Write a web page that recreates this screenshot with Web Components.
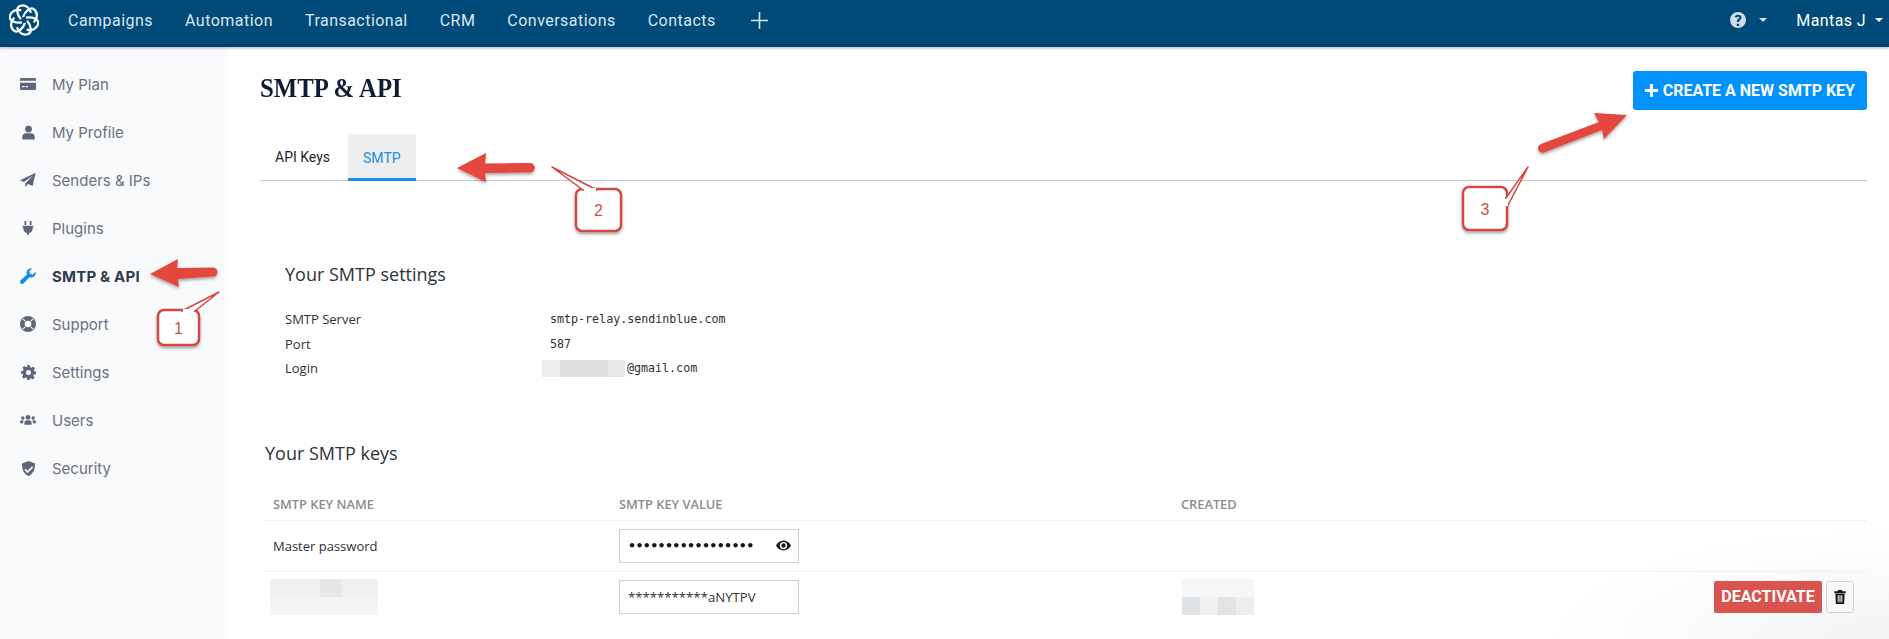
<!DOCTYPE html>
<html>
<head>
<meta charset="utf-8">
<title>SMTP & API</title>
<style>
  html, body { margin: 0; height: 100%; }
  body { font-family: "Open Sans", sans-serif; overflow: hidden; }
  app-shell { position: relative; }
</style>
</head>
<body>
<app-shell>
  <top-bar slot="top"></top-bar>
  <side-menu slot="side"></side-menu>
  <main-panel slot="main"></main-panel>
  <call-outs slot="over"></call-outs>
</app-shell>

<script>
// svg icons used around the page, all drawn in a 24x24 box
const ICONS = {
  card: '<path d="M0 4.5A1.5 1.5 0 0 1 1.500 3h21A1.500 1.500 0 0 1 24 4.500V7H0zM0 10h24v9.500a1.500 1.500 0 0 1-1.500 1.500h-21A1.500 1.500 0 0 1 0 19.500zm3 5v2h4v-2zm5.500 0v2H12v-2z" fill-rule="evenodd"/>',
  user: '<circle cx="12" cy="6.500" r="5.500"/><path d="M2 23v-3.500A6.500 6.500 0 0 1 8.500 13h7a6.500 6.500 0 0 1 6.500 6.500V23z"/>',
  plane: '<path d="M23.500 1 19 21l-7-3-4 5v-6L20 5 6 15l-6-2.500z"/>',
  plug: '<path d="M6 0h3v7H6zM15 0h3v7h-3zM3 8h18v3h-1v2a8 8 0 0 1-6.500 7.800V24h-3v-3.200A8 8 0 0 1 4 13v-2H3z"/>',
  wrench: '<path d="M23.500 5.500a7 7 0 0 1-9.300 8.200L5.500 23a3 3 0 0 1-4.400-.1 3.100 3.100 0 0 1-.1-4.400l9.300-8.700A7 7 0 0 1 18.500.5l-4.300 4.300.9 4 4 .9z"/>',
  support: '<path fill-rule="evenodd" d="M12 0a12 12 0 1 0 0 24 12 12 0 0 0 0-24zm0 7a5 5 0 1 1 0 10 5 5 0 0 1 0-10zM5 3.800l3.300 3.300a6 6 0 0 0-1.200 1.200L3.800 5A9 9 0 0 1 5 3.800zm14 0A9 9 0 0 1 20.200 5l-3.300 3.300a6 6 0 0 0-1.200-1.200zM3.800 19l3.300-3.300a6 6 0 0 0 1.200 1.200L5 20.200A9 9 0 0 1 3.800 19zm12.900-3.300L20.200 19a9 9 0 0 1-1.200 1.200l-3.300-3.300a6 6 0 0 0 1-1.200z"/>',
  gear: '<path fill-rule="evenodd" d="M10 0h4l.7 3.400 2 .8 2.900-1.900 2.800 2.800-1.900 2.900.8 2L24 10.700v3.900l-3.400.7-.8 2 1.900 2.900-2.800 2.800-2.900-1.900-2 .8L14 24h-4l-.7-3.300-2-.8-2.900 1.900-2.800-2.800 1.900-2.900-.8-2L0 13.900v-3.900l3.400-.7.8-2-1.900-2.900 2.800-2.800 2.900 1.900 2-.8zm2 8a4 4 0 1 0 0 8 4 4 0 0 0 0-8z"/>',
  users: '<circle cx="12" cy="8" r="3.600"/><circle cx="4.200" cy="9" r="2.500"/><circle cx="19.800" cy="9" r="2.500"/><path d="M6.500 19v-2a4.500 4.500 0 0 1 4.500-4.500h2a4.500 4.500 0 0 1 4.500 4.500v2zM0 17v-2a2.800 2.800 0 0 1 2.800-2.800h2.600A6 6 0 0 0 4.800 17zM24 17v-2a2.800 2.800 0 0 0-2.800-2.800h-2.600a6 6 0 0 1 .6 4.800z"/>',
  shield: '<path fill-rule="evenodd" d="M12 0 1.500 4C1.500 14 5 21 12 24c7-3 10.500-10 10.500-20zm5.600 8.500 1.900 1.900-9 9-5-5 1.900-1.900 3.100 3.100z"/>',
  trash: '<path fill-rule="evenodd" d="M8 2 9 0h6l1 2h5.500v3.500h-19V2zM4 6.500h16L19 24H5zM8 9v12h1.800V9zm3.100 0v12h1.800V9zm3.100 0v12H16V9z"/>',
  eye: '<path fill-rule="evenodd" d="M12 4C6.500 4 2.300 7.800 0 12c2.300 4.200 6.500 8 12 8s9.700-3.800 12-8c-2.300-4.200-6.500-8-12-8zm0 2.200a5.800 5.800 0 1 1 0 11.600 5.800 5.800 0 0 1 0-11.600zm0 2.300a3.500 3.500 0 1 0 0 7 3.500 3.500 0 0 0 0-7z"/>',
  help: '<path fill-rule="evenodd" d="M12 0a12 12 0 1 0 0 24 12 12 0 0 0 0-24zm-1.800 17.500h3.600V21h-3.600zM12 4c3.200 0 5.300 1.800 5.300 4.400 0 2-1.100 2.900-2.300 3.800-1 .7-1.300 1.100-1.300 2.300v.5h-3.300V14c0-2.100.7-3 2-3.900 1-.7 1.500-1.100 1.500-1.800 0-.8-.7-1.300-1.700-1.300-1.200 0-2 .6-2.500 1.700L7 7.100C7.900 5.200 9.600 4 12 4z"/>',
};

function icon(name, size) {
  return `<svg viewBox="0 0 24 24" width="${size}" height="${size}" fill="currentColor" aria-hidden="true">${ICONS[name]}</svg>`;
}

// page frame: bar on top, menu on the left, content on the right
class AppShell extends HTMLElement {
  constructor() {
    super();
    this.attachShadow({ mode: "open" });
    this.shadowRoot.innerHTML = `<style>
      :host { display: grid; grid-template-columns: 228px 1fr; grid-template-rows: 47px 592px; height: 639px; overflow: hidden; }
      .top { grid-column: 1 / 3; }
    </style>
    <div class="top"><slot name="top"></slot></div>
    <slot name="side"></slot>
    <slot name="main"></slot>
    <slot name="over"></slot>`;
  }
}

class TopBar extends HTMLElement {
  constructor() {
    super();
    this.attachShadow({ mode: "open" });
    const links = ["Campaigns", "Automation", "Transactional", "CRM", "Conversations", "Contacts"];
    // six petals of the logo, same stroke turned around the centre
    const petals = [0, 60, 120, 180, 240, 300].map(a => `<path transform="rotate(${a})" d="M-1 -3C1 -9 7 -14.500 11 -10.500C14.500 -7 14 -1 10 2.500"/>`).join("");
    this.shadowRoot.innerHTML = `<style>
      :host { display: flex; align-items: center; height: 47px; box-sizing: border-box; background: #004a79; border-bottom: 3px solid #004169; box-shadow: 0 1px 3px rgba(0,40,70,.35); color: #d9e6ef; font: 400 16px Roboto, sans-serif; letter-spacing: .47px; position: relative; z-index: 2; padding-bottom: 4px; padding-left: 9px; }
      .logo { display: block; margin-right: 29px; color: #fff; }
      nav { display: flex; gap: 32px; align-items: center; }
      .plus { display: block; margin-left: 3px; }
      .right { margin-left: auto; display: flex; align-items: center; color: #fff; }
      .help { display: flex; color: #cfdde8; margin-right: 6px; }
      .caret { width: 0; height: 0; border: 4px solid transparent; border-top-color: #cfdde8; border-bottom: 0; margin-left: 7px; }
      .name { margin-left: 29px; letter-spacing: .4px; }
      .right .caret:last-child { margin: 0 6px 0 9px; border-top-color: #fff; }
    </style>
    <svg class="logo" width="30" height="32" viewBox="-15.500 -16.500 31 33" fill="none" stroke="currentColor" stroke-width="2.300">${petals}</svg>
    <nav>
      ${links.map(l => `<span>${l}</span>`).join("")}
      <svg class="plus" width="17" height="17" viewBox="0 0 17 17" stroke="#d9e6ef" stroke-width="1.600"><path d="M8.500 0v17M0 8.500h17"/></svg>
    </nav>
    <div class="right">
      <span class="help">${icon("help", 16)}</span><span class="caret"></span>
      <span class="name">Mantas J</span><span class="caret"></span>
    </div>`;
  }
}

class SideMenu extends HTMLElement {
  constructor() {
    super();
    this.attachShadow({ mode: "open" });
    const items = [
      ["card", "My Plan", 16],
      ["user", "My Profile", 15],
      ["plane", "Senders & IPs", 16],
      ["plug", "Plugins", 14],
      ["wrench", "SMTP & API", 16],
      ["support", "Support", 16],
      ["gear", "Settings", 15],
      ["users", "Users", 16],
      ["shield", "Security", 15],
    ];
    this.shadowRoot.innerHTML = `<style>
      :host { display: flex; flex-direction: column; padding-top: 13px; background: #f9fafc; font: 400 15px Inter, sans-serif; color: #68717f; }
      .item { display: flex; align-items: center; height: 48px; }
      .ic { width: 16px; margin: 0 16px 0 20px; display: flex; justify-content: center; color: #5d6779; }
      .on { font-weight: 700; color: #313a4b; letter-spacing: .2px; }
      .on .ic { color: #1b8fe6; }
    </style>
    ${items.map(([ic, label, s]) => `<div class="item ${label == "SMTP & API" ? "on" : ""}"><span class="ic">${icon(ic, s)}</span><span>${label.replace("&", "&amp;")}</span></div>`).join("")}`;
  }
}

class MainPanel extends HTMLElement {
  constructor() {
    super();
    this.attachShadow({ mode: "open" });
    this.shadowRoot.innerHTML = `<style>
      :host { display: block; padding: 24px 22px 0 32px; color: #2b323a; background: radial-gradient(ellipse 340px 110px at 100% 100%, #f2f3f5, #fff); }
      .head { display: flex; justify-content: space-between; align-items: flex-start; height: 63px; }
      h1 { margin: 1px 0 0; font: 700 27.500px "Liberation Serif", serif; color: #0e1c36; transform: scaleX(.9); transform-origin: left; }
      .add { display: flex; align-items: center; gap: 5px; height: 39px; box-sizing: border-box; padding: 0 12px; background: #0092ff; border-radius: 3px; color: #fff; font: 700 16px Roboto, sans-serif; }
      .tabs { display: flex; border-bottom: 1px solid #c2c8ce; height: 47px; box-sizing: border-box; }
      .tab { display: flex; align-items: center; padding: 0 18px 0 15px; font: 400 14px Roboto, sans-serif; color: #1d2530; height: 46px; box-sizing: border-box; }
      .tab.on { background: #eeeeee; color: #1a8fe3; border-bottom: 3px solid #1a8fe3; height: 47px; padding: 3px 15px 0; }
    </style>
    <div class="head">
      <h1>SMTP &amp; API</h1>
      <div class="add"><svg width="13" height="13" viewBox="0 0 13 13" fill="#fff"><path d="M5 0h3v5h5v3H8v5H5V8H0V5h5z"/></svg>CREATE A NEW SMTP KEY</div>
    </div>
    <div class="tabs"><div class="tab">API Keys</div><div class="tab on">SMTP</div></div>
    <smtp-settings></smtp-settings>
    <smtp-keys></smtp-keys>`;
  }
}

class SmtpSettings extends HTMLElement {
  constructor() {
    super();
    this.attachShadow({ mode: "open" });
    this.shadowRoot.innerHTML = `<style>
      :host { display: block; padding: 80px 0 0 25px; font-family: "Open Sans", sans-serif; }
      h2 { margin: 0 0 20px; font-size: 18px; font-weight: 400; line-height: 26px; color: #2b323a; }
      .row { display: grid; grid-template-columns: 265px 1fr; height: 24.500px; align-items: center; font-size: 13px; color: #2b323a; }
      code { font: 11.670px "DejaVu Sans Mono", monospace; display: flex; align-items: center; }
      .blur { width: 83px; height: 17px; margin-left: -8px; margin-right: 2px; background: linear-gradient(90deg, #ededee 0 22%, #dfdfe1 22% 80%, #e8e8ea 80%); }
    </style>
    <h2>Your SMTP settings</h2>
    <div class="row"><span>SMTP Server</span><code>smtp-relay.sendinblue.com</code></div>
    <div class="row"><span>Port</span><code>587</code></div>
    <div class="row"><span>Login</span><code><span class="blur"></span>@gmail.com</code></div>`;
  }
}

class SmtpKeys extends HTMLElement {
  constructor() {
    super();
    this.attachShadow({ mode: "open" });
    this.shadowRoot.innerHTML = `<style>
      :host { display: block; padding: 59px 0 0 5px; font-family: "Open Sans", sans-serif; }
      h2 { margin: 0 0 18px; font-size: 18px; font-weight: 400; line-height: 26px; color: #2b323a; }
      .line { border-bottom: 1px solid #f0f1f2; padding-left: 8px; display: grid; grid-template-columns: 346px 562px 1fr auto; align-items: center; font-size: 13px; color: #2b323a; }
      .hd { height: 37px; box-sizing: border-box; padding-top: 4px; font-size: 12.800px; font-weight: 600; color: #8a8d90; }
      .r1 { height: 50px; }
      .r2 { height: 50px; border: 0; }
      .field { width: 180px; height: 34px; box-sizing: border-box; border: 1px solid #cfcfcf; display: flex; align-items: center; justify-content: space-between; padding: 0 7px 0 8px; font-size: 13.200px; color: #333; }
      .dots { font: 700 12.500px "DejaVu Sans", sans-serif; letter-spacing: -.6px; color: #111; }
      .eye { display: flex; color: #1a1a1a; }
      .blur1 { width: 108px; height: 36px; margin-left: -3px; background:
        linear-gradient(#e6e7e9, #e6e7e9) 50px 0 / 22px 18px no-repeat,
        linear-gradient(#eeeff1 50%, #f4f4f6 50%); }
      .blur2 { width: 72px; height: 36px; margin-left: 1px; background:
        linear-gradient(90deg, #e0e3e6 0 25%, #eff0f2 25% 50%, #e2e3e5 50% 75%, #ecedef 75%) 0 18px / 100% 18px no-repeat,
        #f6f6f7; }
      .acts { display: flex; gap: 4px; margin-right: 13px; align-items: center; }
      .deact { width: 108px; height: 32px; display: flex; align-items: center; justify-content: center; background: #d9534f; border-radius: 2px; color: #fff; font: 700 16px Roboto, sans-serif; }
      .del { width: 28px; height: 32px; box-sizing: border-box; display: flex; align-items: center; justify-content: center; border: 1px solid #cfd2d5; border-radius: 3px; color: #111; }
    </style>
    <h2>Your SMTP keys</h2>
    <div class="line hd"><span>SMTP KEY NAME</span><span>SMTP KEY VALUE</span><span>CREATED</span><span></span></div>
    <div class="line r1"><span>Master password</span><div class="field"><span class="dots">•••••••••••••••••</span><span class="eye">${icon("eye", 15)}</span></div><span></span><span></span></div>
    <div class="line r2"><div class="blur1"></div><div class="field">***********aNYTPV</div><div class="blur2"></div><div class="acts"><div class="deact">DEACTIVATE</div><div class="del">${icon("trash", 14)}</div></div></div>`;
  }
}

// the red arrows and numbered notes laid over the screenshot
class CallOuts extends HTMLElement {
  note(x, y, w, h, n) {
    return `<rect x="${x}" y="${y}" width="${w}" height="${h}" rx="6" fill="#fff" stroke="#cf4a44" stroke-width="2.500" filter="url(#sh)"/>
      <text x="${x + w / 2}" y="${y + h / 2 + 6}" text-anchor="middle" font-family="Liberation Sans, sans-serif" font-size="16" fill="#c9524d">${n}</text>`;
  }
  constructor() {
    super();
    this.attachShadow({ mode: "open" });
    this.shadowRoot.innerHTML = `<style>
      :host { position: absolute; left: 0; top: 0; z-index: 5; pointer-events: none; }
      svg { display: block; }
    </style>
    <svg width="1889" height="639">
      <defs><filter id="sh" x="-30%" y="-30%" width="160%" height="170%"><feDropShadow dx="0" dy="2" stdDeviation="1.500" flood-color="#000" flood-opacity=".35"/></filter></defs>
      <g fill="#e4473d" filter="url(#sh)">
        <path d="M150 274 178 259 177 268 213 267.500a4.500 4.500 0 0 1 0 9L178 279 179 287z"/>
        <path d="M457 168 486 153 485 163.500 530 163a4.500 4.500 0 0 1 0 9.500L485 173 486 182z"/>
        <path d="M1627 115 1594 113 1599 122 1541 144a4 4 0 0 0 3 8.500L1602 130 1604 139z"/>
      </g>
      ${this.note(158, 310, 41, 35, 1)}
      ${this.note(576, 189, 45, 42, 2)}
      ${this.note(1463, 187, 44, 43, 3)}
      <g fill="#fff" stroke="#d5453f" stroke-width="1.500" stroke-linejoin="round">
        <path d="M182 311 219 292 195 311z"/>
        <path d="M583 190 552 167 597 190z"/>
        <path d="M1506 198 1528 167 1507 207z"/>
      </g>
      <g fill="#fff">
        <rect x="183" y="309" width="11" height="3"/>
        <rect x="584" y="188" width="12" height="3"/>
        <rect x="1505" y="199" width="3" height="7"/>
      </g>
    </svg>`;
  }
}

customElements.define("app-shell", AppShell);
customElements.define("top-bar", TopBar);
customElements.define("side-menu", SideMenu);
customElements.define("main-panel", MainPanel);
customElements.define("smtp-settings", SmtpSettings);
customElements.define("smtp-keys", SmtpKeys);
customElements.define("call-outs", CallOuts);
</script>
</body>
</html>
